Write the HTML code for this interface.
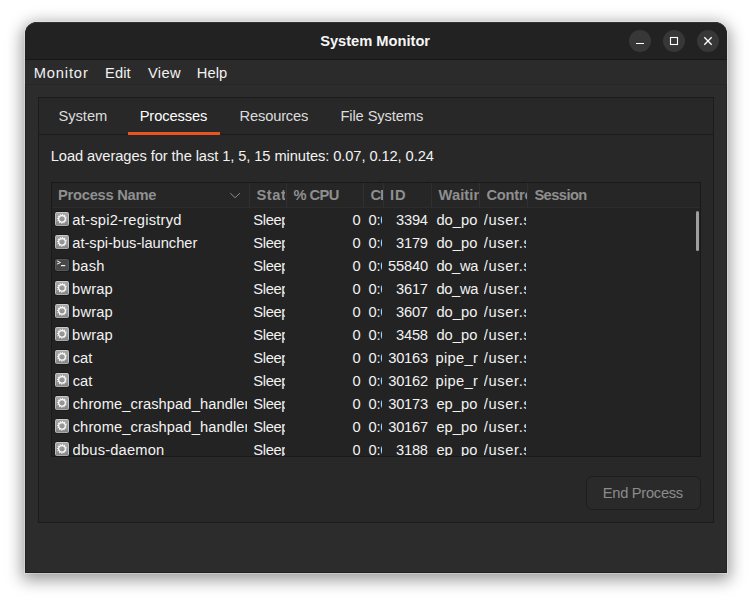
<!DOCTYPE html>
<html lang="en">
<head>
<meta charset="utf-8">
<title>System Monitor</title>
<style>
html,body{margin:0;padding:0;}
body{width:752px;height:601px;background:#fff;position:relative;overflow:hidden;
  font-family:"Liberation Sans",sans-serif;font-size:14.7px;color:#f2f2f2;}
.abs{position:absolute;}
.t{position:absolute;white-space:pre;line-height:20px;height:20px;}
#win{position:absolute;left:25px;top:22px;width:702px;height:551px;background:#2c2c2c;
  border-radius:12px 12px 0 0;
  box-shadow:inset 0 0 0 1px rgba(0,0,0,.22),0 0 0 1px rgba(255,255,255,.30),0 4px 16px 3px rgba(0,0,0,.40);}
#titlebar{position:absolute;left:25px;top:22px;width:702px;height:37px;background:#222222;border-bottom:1px solid #171717;
  box-shadow:inset 0 1px 0 rgba(255,255,255,.07);border-radius:12px 12px 0 0;}
.wb{position:absolute;width:22px;height:22px;border-radius:11px;background:#373737;top:30px;}
#menubar{position:absolute;left:25px;top:60px;width:702px;height:24px;background:#2b2b2b;border-bottom:1px solid #272727;}
#nb{position:absolute;left:38px;top:97px;width:674px;height:424px;border:1px solid #1b1b1b;background:#282828;}
#tabline{position:absolute;left:39px;top:134px;width:674px;height:1px;background:#1b1b1b;}
#ul{position:absolute;left:128px;top:132px;width:92px;height:3px;background:#e95420;}
#tree{position:absolute;left:51px;top:182px;width:648px;height:273px;border:1px solid #191919;background:#232323;}
#hdr{position:absolute;left:52px;top:183px;width:648px;height:24px;background:#262626;border-bottom:1px solid #2c2c2c;}
.sep{position:absolute;top:183px;width:1px;height:24px;background:#303030;}
#sb{position:absolute;left:696px;top:211px;width:3px;height:40px;border-radius:2px;background:#9e9e9e;}
.gi{position:absolute;left:55px;width:12px;height:12px;border:1px solid #bcbcbc;border-top-color:#cacaca;border-bottom-color:#aaaaaa;border-radius:2px;background:linear-gradient(#a6a6a6,#868686);box-shadow:0 0 0 1px rgba(0,0,0,.22);}
.gi svg{position:absolute;left:-1px;top:-1px;}
.ti{position:absolute;left:55px;width:12px;height:10px;border:1px solid #585858;border-radius:1.5px;background:#484848;box-shadow:0 0 0 1px rgba(0,0,0,.22);}
.ti svg{position:absolute;left:-1px;top:-2px;}
#btn{position:absolute;left:586px;top:476px;width:113px;height:32px;border:1px solid #1d1d1d;border-radius:6px;background:#2a2a2a;}
</style>
</head>
<body>
<div id="win"></div>
<div id="titlebar"></div>
<div class="t" style="left:320.20px;top:31px;letter-spacing:-0.022px;font-weight:700;color:#f6f6f6;">System Monitor</div>
<div class="wb" style="left:629px"></div>
<div class="wb" style="left:663px"></div>
<div class="wb" style="left:697px"></div>
<svg class="abs" style="left:625px;top:26px" width="100" height="30" viewBox="625 26 100 30">
<rect x="636" y="43" width="8" height="1" fill="#fff"/>
<rect x="670.5" y="37.5" width="7" height="7" fill="none" stroke="#fff" stroke-width="1.1"/>
<path d="M704.3 37.3 L711.7 44.7 M711.7 37.3 L704.3 44.7" stroke="#fff" stroke-width="1.3" fill="none"/>
</svg>
<div id="menubar"></div>
<div class="t" style="left:33.76px;top:63px;letter-spacing:0.841px;">Monitor</div>
<div class="t" style="left:105.06px;top:63px;letter-spacing:0.088px;">Edit</div>
<div class="t" style="left:147.96px;top:63px;letter-spacing:0.342px;">View</div>
<div class="t" style="left:196.66px;top:63px;letter-spacing:0.120px;">Help</div>
<div id="nb"></div>
<div id="tabline"></div>
<div id="ul"></div>
<div class="t" style="left:58.47px;top:106px;letter-spacing:-0.032px;color:#dcdcdc;">System</div>
<div class="t" style="left:139.66px;top:106px;letter-spacing:-0.101px;color:#ffffff;">Processes</div>
<div class="t" style="left:239.56px;top:106px;letter-spacing:-0.175px;color:#dcdcdc;">Resources</div>
<div class="t" style="left:340.46px;top:106px;letter-spacing:-0.109px;color:#dcdcdc;">File Systems</div>
<div class="t" style="left:50.76px;top:146px;letter-spacing:-0.092px;">Load averages for the last 1, 5, 15 minutes: 0.07, 0.12, 0.24</div>
<div id="tree"></div>
<div id="hdr"></div>
<div class="sep" style="left:249px"></div>
<div class="sep" style="left:286px"></div>
<div class="sep" style="left:363px"></div>
<div class="sep" style="left:383px"></div>
<div class="sep" style="left:431px"></div>
<div class="sep" style="left:479px"></div>
<div class="sep" style="left:527px"></div>
<div class="t" style="left:58.05px;top:185px;letter-spacing:-0.263px;font-weight:700;color:#8f8f8f;">Process Name</div>
<svg class="abs" style="left:228px;top:190px" width="14" height="10" viewBox="228 190 14 10"><path d="M230.3 193.2 L235.1 197.7 L239.9 193.2" stroke="#8c8c8c" stroke-width="1" fill="none"/></svg>
<div class="t" style="left:256.40px;top:185px;letter-spacing:0.600px;font-weight:700;color:#8f8f8f;width:28.60px;overflow:hidden;">Status</div>
<div class="t" style="left:293.53px;top:185px;letter-spacing:-0.583px;font-weight:700;color:#8f8f8f;">% CPU</div>
<div class="t" style="left:370.40px;top:185px;letter-spacing:-1.106px;font-weight:700;color:#8f8f8f;width:13.10px;overflow:hidden;">CPU Time</div>
<div class="t" style="left:389.95px;top:185px;letter-spacing:0.933px;font-weight:700;color:#8f8f8f;">ID</div>
<div class="t" style="left:438.49px;top:185px;letter-spacing:0.098px;font-weight:700;color:#8f8f8f;width:41.01px;overflow:hidden;">Waiting Channel</div>
<div class="t" style="left:486.40px;top:185px;letter-spacing:-0.209px;font-weight:700;color:#8f8f8f;width:41.10px;overflow:hidden;">Control Group</div>
<div class="t" style="left:534.40px;top:185px;letter-spacing:-0.571px;font-weight:700;color:#8f8f8f;">Session</div>
<div class="gi" style="top:212px"><svg width="14" height="14" viewBox="0 0 14 14"><circle cx="7" cy="6.85" r="3.35" fill="none" stroke="#fff" stroke-width="1.25"/><circle cx="7" cy="6.85" r="4.4" fill="none" stroke="#fff" stroke-width="1.3" stroke-dasharray="0.95 1.354" stroke-dashoffset="0.47" opacity=".9"/></svg></div>
<div class="t" style="left:72.30px;top:210px;letter-spacing:0.244px;">at-spi2-registryd</div>
<div class="t" style="left:253.37px;top:210px;letter-spacing:-0.359px;width:31.63px;overflow:hidden;">Sleeping</div>
<div class="t" style="left:352.40px;top:210px;letter-spacing:0.000px;">0</div>
<div class="t" style="left:368.40px;top:210px;letter-spacing:-0.090px;width:13.80px;overflow:hidden;">0:00.01</div>
<div class="t" style="left:396.07px;top:210px;letter-spacing:-0.250px;">3394</div>
<div class="t" style="left:436.40px;top:210px;letter-spacing:0.024px;">do_po</div>
<div class="t" style="left:483.69px;top:210px;letter-spacing:0.667px;width:42.61px;overflow:hidden;">/user.slice/user-1000.slice</div>
<div class="gi" style="top:235px"><svg width="14" height="14" viewBox="0 0 14 14"><circle cx="7" cy="6.85" r="3.35" fill="none" stroke="#fff" stroke-width="1.25"/><circle cx="7" cy="6.85" r="4.4" fill="none" stroke="#fff" stroke-width="1.3" stroke-dasharray="0.95 1.354" stroke-dashoffset="0.47" opacity=".9"/></svg></div>
<div class="t" style="left:72.30px;top:233px;letter-spacing:-0.038px;">at-spi-bus-launcher</div>
<div class="t" style="left:253.37px;top:233px;letter-spacing:-0.359px;width:31.63px;overflow:hidden;">Sleeping</div>
<div class="t" style="left:352.40px;top:233px;letter-spacing:0.000px;">0</div>
<div class="t" style="left:368.40px;top:233px;letter-spacing:-0.090px;width:13.80px;overflow:hidden;">0:00.01</div>
<div class="t" style="left:396.07px;top:233px;letter-spacing:-0.247px;">3179</div>
<div class="t" style="left:436.40px;top:233px;letter-spacing:0.024px;">do_po</div>
<div class="t" style="left:483.69px;top:233px;letter-spacing:0.667px;width:42.61px;overflow:hidden;">/user.slice/user-1000.slice</div>
<div class="ti" style="top:259px"><svg width="14" height="14" viewBox="0 0 14 14"><path d="M1.9 2.9 L5.5 4.5 L1.9 6.1" stroke="#fff" stroke-width="1" stroke-opacity=".9" fill="none"/><rect x="6" y="7" width="4.2" height="1.2" fill="#f4f4f4"/></svg></div>
<div class="t" style="left:72.06px;top:256px;letter-spacing:0.150px;">bash</div>
<div class="t" style="left:253.37px;top:256px;letter-spacing:-0.359px;width:31.63px;overflow:hidden;">Sleeping</div>
<div class="t" style="left:352.40px;top:256px;letter-spacing:0.000px;">0</div>
<div class="t" style="left:368.40px;top:256px;letter-spacing:-0.090px;width:13.80px;overflow:hidden;">0:00.01</div>
<div class="t" style="left:388.12px;top:256px;letter-spacing:-0.195px;">55840</div>
<div class="t" style="left:436.40px;top:256px;letter-spacing:-0.333px;">do_wa</div>
<div class="t" style="left:483.69px;top:256px;letter-spacing:0.667px;width:42.61px;overflow:hidden;">/user.slice/user-1000.slice</div>
<div class="gi" style="top:281px"><svg width="14" height="14" viewBox="0 0 14 14"><circle cx="7" cy="6.85" r="3.35" fill="none" stroke="#fff" stroke-width="1.25"/><circle cx="7" cy="6.85" r="4.4" fill="none" stroke="#fff" stroke-width="1.3" stroke-dasharray="0.95 1.354" stroke-dashoffset="0.47" opacity=".9"/></svg></div>
<div class="t" style="left:72.06px;top:279px;letter-spacing:0.168px;">bwrap</div>
<div class="t" style="left:253.37px;top:279px;letter-spacing:-0.359px;width:31.63px;overflow:hidden;">Sleeping</div>
<div class="t" style="left:352.40px;top:279px;letter-spacing:0.000px;">0</div>
<div class="t" style="left:368.40px;top:279px;letter-spacing:-0.090px;width:13.80px;overflow:hidden;">0:00.01</div>
<div class="t" style="left:396.07px;top:279px;letter-spacing:-0.247px;">3617</div>
<div class="t" style="left:436.40px;top:279px;letter-spacing:-0.333px;">do_wa</div>
<div class="t" style="left:483.69px;top:279px;letter-spacing:0.667px;width:42.61px;overflow:hidden;">/user.slice/user-1000.slice</div>
<div class="gi" style="top:304px"><svg width="14" height="14" viewBox="0 0 14 14"><circle cx="7" cy="6.85" r="3.35" fill="none" stroke="#fff" stroke-width="1.25"/><circle cx="7" cy="6.85" r="4.4" fill="none" stroke="#fff" stroke-width="1.3" stroke-dasharray="0.95 1.354" stroke-dashoffset="0.47" opacity=".9"/></svg></div>
<div class="t" style="left:72.06px;top:302px;letter-spacing:0.168px;">bwrap</div>
<div class="t" style="left:253.37px;top:302px;letter-spacing:-0.359px;width:31.63px;overflow:hidden;">Sleeping</div>
<div class="t" style="left:352.40px;top:302px;letter-spacing:0.000px;">0</div>
<div class="t" style="left:368.40px;top:302px;letter-spacing:-0.090px;width:13.80px;overflow:hidden;">0:00.01</div>
<div class="t" style="left:396.07px;top:302px;letter-spacing:-0.247px;">3607</div>
<div class="t" style="left:436.40px;top:302px;letter-spacing:0.024px;">do_po</div>
<div class="t" style="left:483.69px;top:302px;letter-spacing:0.667px;width:42.61px;overflow:hidden;">/user.slice/user-1000.slice</div>
<div class="gi" style="top:327px"><svg width="14" height="14" viewBox="0 0 14 14"><circle cx="7" cy="6.85" r="3.35" fill="none" stroke="#fff" stroke-width="1.25"/><circle cx="7" cy="6.85" r="4.4" fill="none" stroke="#fff" stroke-width="1.3" stroke-dasharray="0.95 1.354" stroke-dashoffset="0.47" opacity=".9"/></svg></div>
<div class="t" style="left:72.06px;top:325px;letter-spacing:0.168px;">bwrap</div>
<div class="t" style="left:253.37px;top:325px;letter-spacing:-0.359px;width:31.63px;overflow:hidden;">Sleeping</div>
<div class="t" style="left:352.40px;top:325px;letter-spacing:0.000px;">0</div>
<div class="t" style="left:368.40px;top:325px;letter-spacing:-0.090px;width:13.80px;overflow:hidden;">0:00.01</div>
<div class="t" style="left:396.07px;top:325px;letter-spacing:-0.256px;">3458</div>
<div class="t" style="left:436.40px;top:325px;letter-spacing:0.024px;">do_po</div>
<div class="t" style="left:483.69px;top:325px;letter-spacing:0.667px;width:42.61px;overflow:hidden;">/user.slice/user-1000.slice</div>
<div class="gi" style="top:350px"><svg width="14" height="14" viewBox="0 0 14 14"><circle cx="7" cy="6.85" r="3.35" fill="none" stroke="#fff" stroke-width="1.25"/><circle cx="7" cy="6.85" r="4.4" fill="none" stroke="#fff" stroke-width="1.3" stroke-dasharray="0.95 1.354" stroke-dashoffset="0.47" opacity=".9"/></svg></div>
<div class="t" style="left:72.70px;top:348px;letter-spacing:0.000px;">cat</div>
<div class="t" style="left:253.37px;top:348px;letter-spacing:-0.359px;width:31.63px;overflow:hidden;">Sleeping</div>
<div class="t" style="left:352.40px;top:348px;letter-spacing:0.000px;">0</div>
<div class="t" style="left:368.40px;top:348px;letter-spacing:-0.090px;width:13.80px;overflow:hidden;">0:00.01</div>
<div class="t" style="left:388.21px;top:348px;letter-spacing:-0.223px;">30163</div>
<div class="t" style="left:435.56px;top:348px;letter-spacing:0.289px;">pipe_r</div>
<div class="t" style="left:483.69px;top:348px;letter-spacing:0.667px;width:42.61px;overflow:hidden;">/user.slice/user-1000.slice</div>
<div class="gi" style="top:373px"><svg width="14" height="14" viewBox="0 0 14 14"><circle cx="7" cy="6.85" r="3.35" fill="none" stroke="#fff" stroke-width="1.25"/><circle cx="7" cy="6.85" r="4.4" fill="none" stroke="#fff" stroke-width="1.3" stroke-dasharray="0.95 1.354" stroke-dashoffset="0.47" opacity=".9"/></svg></div>
<div class="t" style="left:72.70px;top:371px;letter-spacing:0.000px;">cat</div>
<div class="t" style="left:253.37px;top:371px;letter-spacing:-0.359px;width:31.63px;overflow:hidden;">Sleeping</div>
<div class="t" style="left:352.40px;top:371px;letter-spacing:0.000px;">0</div>
<div class="t" style="left:368.40px;top:371px;letter-spacing:-0.090px;width:13.80px;overflow:hidden;">0:00.01</div>
<div class="t" style="left:388.21px;top:371px;letter-spacing:-0.221px;">30162</div>
<div class="t" style="left:435.56px;top:371px;letter-spacing:0.289px;">pipe_r</div>
<div class="t" style="left:483.69px;top:371px;letter-spacing:0.667px;width:42.61px;overflow:hidden;">/user.slice/user-1000.slice</div>
<div class="gi" style="top:396px"><svg width="14" height="14" viewBox="0 0 14 14"><circle cx="7" cy="6.85" r="3.35" fill="none" stroke="#fff" stroke-width="1.25"/><circle cx="7" cy="6.85" r="4.4" fill="none" stroke="#fff" stroke-width="1.3" stroke-dasharray="0.95 1.354" stroke-dashoffset="0.47" opacity=".9"/></svg></div>
<div class="t" style="left:72.70px;top:394px;letter-spacing:0.092px;width:174.60px;overflow:hidden;">chrome_crashpad_handler</div>
<div class="t" style="left:253.37px;top:394px;letter-spacing:-0.359px;width:31.63px;overflow:hidden;">Sleeping</div>
<div class="t" style="left:352.40px;top:394px;letter-spacing:0.000px;">0</div>
<div class="t" style="left:368.40px;top:394px;letter-spacing:-0.090px;width:13.80px;overflow:hidden;">0:00.01</div>
<div class="t" style="left:388.21px;top:394px;letter-spacing:-0.223px;">30173</div>
<div class="t" style="left:436.40px;top:394px;letter-spacing:0.024px;">ep_po</div>
<div class="t" style="left:483.69px;top:394px;letter-spacing:0.667px;width:42.61px;overflow:hidden;">/user.slice/user-1000.slice</div>
<div class="gi" style="top:419px"><svg width="14" height="14" viewBox="0 0 14 14"><circle cx="7" cy="6.85" r="3.35" fill="none" stroke="#fff" stroke-width="1.25"/><circle cx="7" cy="6.85" r="4.4" fill="none" stroke="#fff" stroke-width="1.3" stroke-dasharray="0.95 1.354" stroke-dashoffset="0.47" opacity=".9"/></svg></div>
<div class="t" style="left:72.70px;top:417px;letter-spacing:0.092px;width:174.60px;overflow:hidden;">chrome_crashpad_handler</div>
<div class="t" style="left:253.37px;top:417px;letter-spacing:-0.359px;width:31.63px;overflow:hidden;">Sleeping</div>
<div class="t" style="left:352.40px;top:417px;letter-spacing:0.000px;">0</div>
<div class="t" style="left:368.40px;top:417px;letter-spacing:-0.090px;width:13.80px;overflow:hidden;">0:00.01</div>
<div class="t" style="left:388.21px;top:417px;letter-spacing:-0.221px;">30167</div>
<div class="t" style="left:436.40px;top:417px;letter-spacing:0.024px;">ep_po</div>
<div class="t" style="left:483.69px;top:417px;letter-spacing:0.667px;width:42.61px;overflow:hidden;">/user.slice/user-1000.slice</div>
<div class="gi" style="top:442px"><svg width="14" height="14" viewBox="0 0 14 14"><circle cx="7" cy="6.85" r="3.35" fill="none" stroke="#fff" stroke-width="1.25"/><circle cx="7" cy="6.85" r="4.4" fill="none" stroke="#fff" stroke-width="1.3" stroke-dasharray="0.95 1.354" stroke-dashoffset="0.47" opacity=".9"/></svg></div>
<div class="t" style="left:72.60px;top:440px;letter-spacing:0.179px;clip-path:inset(0 0 4px 0);">dbus-daemon</div>
<div class="t" style="left:253.37px;top:440px;letter-spacing:-0.359px;width:31.63px;overflow:hidden;clip-path:inset(0 0 4px 0);">Sleeping</div>
<div class="t" style="left:352.40px;top:440px;letter-spacing:0.000px;clip-path:inset(0 0 4px 0);">0</div>
<div class="t" style="left:368.40px;top:440px;letter-spacing:-0.090px;width:13.80px;overflow:hidden;clip-path:inset(0 0 4px 0);">0:00.01</div>
<div class="t" style="left:396.07px;top:440px;letter-spacing:-0.256px;clip-path:inset(0 0 4px 0);">3188</div>
<div class="t" style="left:436.40px;top:440px;letter-spacing:0.024px;clip-path:inset(0 0 4px 0);">ep_po</div>
<div class="t" style="left:483.69px;top:440px;letter-spacing:0.667px;width:42.61px;overflow:hidden;clip-path:inset(0 0 4px 0);">/user.slice/user-1000.slice</div>
<div id="sb"></div>
<div id="btn"></div>
<div class="t" style="left:602.76px;top:483px;letter-spacing:-0.283px;color:#8c8c8c;">End Process</div>
</body>
</html>
